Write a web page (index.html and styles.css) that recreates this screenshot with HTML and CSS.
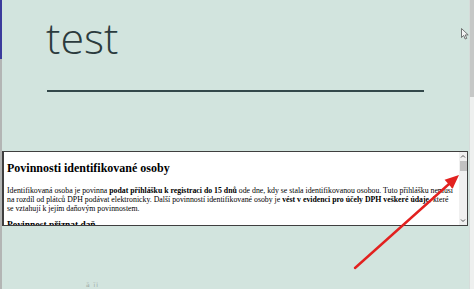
FILE: index.html
```html
<!DOCTYPE html>
<html lang="cs">
<head>
<meta charset="utf-8">
<title>test</title>
<link rel="stylesheet" href="styles.css">
</head>
<body>
<div class="page">
  <div class="edge"><div class="edge-top"></div></div>
  <main class="main">
    <h1 class="title">test</h1>
    <div class="rule"></div>
    <section class="box">
      <div class="box-content">
        <h2 class="box-h2">Povinnosti identifikované osoby</h2>
        <p class="box-p">Identifikovaná osoba je povinna <b>podat přihlášku k registraci do 15 dnů</b> ode dne, kdy se stala identifikovanou osobou. Tuto přihlášku nemusí na rozdíl od plátců DPH podávat elektronicky. Další povinností identifikované osoby je <b>vést v evidenci pro účely DPH veškeré údaje</b>, které se vztahují k jejím daňovým povinnostem.</p>
        <h3 class="box-h3">Povinnost přiznat daň</h3>
      </div>
      <div class="vscroll">
        <svg class="chev" width="8" height="5" viewBox="0 0 8 5"><path d="M2 3.5 L4 1.5 L6 3.5" fill="none" stroke="#555" stroke-width="1"/></svg>
        <div class="thumb"></div>
        <div class="track"></div>
        <svg class="chev" width="8" height="5" viewBox="0 0 8 5"><path d="M2 1.5 L4 3.5 L6 1.5" fill="none" stroke="#555" stroke-width="1"/></svg>
      </div>
    </section>
    <div class="foot">ä ïi</div>
  </main>
  <div class="pscroll"><div class="pthumb"></div></div>
</div>
<svg class="arrow" width="474" height="289" viewBox="0 0 474 289">
  <line x1="355" y1="268" x2="449" y2="184" stroke="#e2211f" stroke-width="2.4" stroke-linecap="round"/>
  <polygon points="459,175 452.6,188.8 444.6,179.8" fill="#e2211f"/>
</svg>
<svg class="cursor" width="9" height="12" viewBox="0 0 9 12">
  <path d="M0.5 0.5 L0.5 9.5 L2.7 7.4 L4.2 11 L5.7 10.4 L4.3 6.9 L7.2 6.9 Z" fill="#f4f4f4" stroke="#555" stroke-width="0.8"/>
</svg>
</body>
</html>
```
FILE: styles.css
```css
* { box-sizing: border-box; }
html, body { margin: 0; padding: 0; }
body {
  width: 474px;
  height: 289px;
  overflow: hidden;
  background: #d2e4de;
  font-family: "Liberation Serif", "Times New Roman", serif;
}
.page {
  display: flex;
  height: 289px;
}
.edge {
  width: 2px;
  background: #b3b5b4;
  flex: none;
}
.edge-top {
  height: 59px;
  background: #3b3b9c;
}
.main {
  flex: 1;
  display: flex;
  flex-direction: column;
  min-width: 0;
}
.title {
  margin: 12px 0 0 0;
  padding-left: 44px;
  font-family: "Open Sans", "Segoe UI", sans-serif;
  font-weight: 300;
  font-size: 43px;
  line-height: 52px;
  color: #2b3b3d;
}
.rule {
  margin: 26px 0 0 45px;
  width: 377px;
  height: 2px;
  background: #33484a;
}
.box {
  margin: 59px 1px 0 0;
  height: 75px;
  border: 1px solid #3f3f3f;
  border-left-width: 2px;
  background: #fff;
  display: flex;
}
.box-content {
  flex: 1;
  overflow: hidden;
  padding: 0 3px 0 3px;
  color: #000;
}
.box-h2 {
  margin: 9px 0 0;
  font-size: 12px;
  font-weight: bold;
  line-height: normal;
}
.box-p {
  margin: 10px 0 0;
  font-size: 7.8px;
  line-height: 9px;
}
.box-h3 {
  margin: 7px 0 0;
  font-size: 9.4px;
  font-weight: bold;
}
.vscroll {
  width: 8px;
  flex: none;
  background: #f0f0f0;
  display: flex;
  flex-direction: column;
  align-items: center;
}
.chev {
  display: block;
  margin-top: 2px;
  flex: none;
}
.thumb {
  width: 7px;
  height: 10px;
  margin-top: 2px;
  background: #c1c1c1;
  flex: none;
}
.track { flex: 1; }
.vscroll .chev:last-child { margin: 0 0 2px; }
.foot {
  margin: 55px 0 0 84px;
  font-family: "DejaVu Sans", sans-serif;
  font-size: 6px;
  color: #9aa6a2;
  letter-spacing: 1px;
}
.pscroll {
  width: 5px;
  flex: none;
  background: #eef0ef;
  border-left: 1px solid #d6dcda;
}
.pthumb {
  height: 97px;
  background: #c6c8c7;
}
.arrow {
  position: absolute;
  left: 0;
  top: 0;
  pointer-events: none;
}
.cursor {
  position: absolute;
  left: 461px;
  top: 28px;
  pointer-events: none;
}
```
